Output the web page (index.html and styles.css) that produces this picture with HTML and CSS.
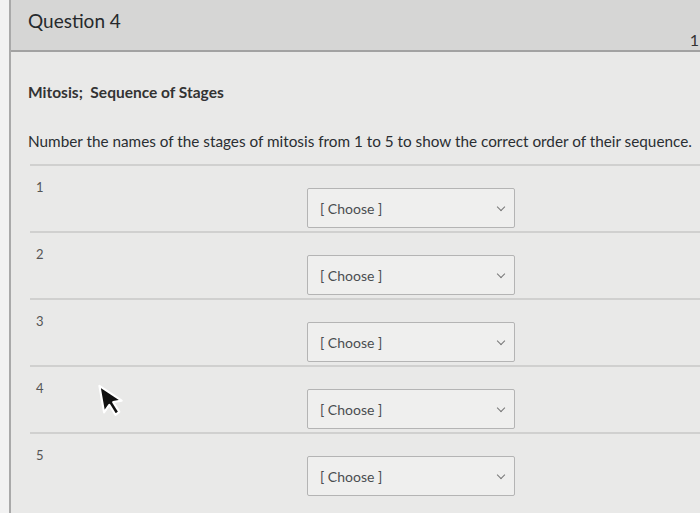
FILE: index.html
```html
<!DOCTYPE html>
<html lang="en">
<head>
  <meta charset="UTF-8" />
  <meta name="viewport" content="width=device-width, initial-scale=1.0"/>
  <title>Question 4</title>
  <link rel="stylesheet" href="styles.css">
</head>
<body>

  <div class="quiz-page">
    <div class="question">
      <div class="question-header">
        <h2>Question 4</h2>
        <span class="points">1</span>
      </div>

      <div class="question-body">
        <p class="title">Mitosis;&nbsp; Sequence of Stages</p>
        <p class="prompt">Number the names of the stages of mitosis from 1 to 5 to show the correct order of their sequence.</p>

        <div class="answers">
          <div class="answer-row">
            <span class="answer-num">1</span>
            <div class="select-box"><span>[ Choose ]</span><span class="chevron"></span></div>
          </div>
          <div class="answer-row">
            <span class="answer-num">2</span>
            <div class="select-box"><span>[ Choose ]</span><span class="chevron"></span></div>
          </div>
          <div class="answer-row">
            <span class="answer-num">3</span>
            <div class="select-box"><span>[ Choose ]</span><span class="chevron"></span></div>
          </div>
          <div class="answer-row">
            <span class="answer-num">4</span>
            <div class="select-box"><span>[ Choose ]</span><span class="chevron"></span></div>
          </div>
          <div class="answer-row">
            <span class="answer-num">5</span>
            <div class="select-box"><span>[ Choose ]</span><span class="chevron"></span></div>
          </div>
        </div>
      </div>
    </div>

    <!-- mouse pointer in the photo -->
    <svg class="pointer" width="28" height="40" viewBox="0 0 26 36">
      <path d="M3 2 L3 27 L9 21 L13 31 L17 29 L13 19 L21 19 Z" fill="#111" stroke="#fff" stroke-width="2" stroke-linejoin="round"/>
    </svg>
  </div>

</body>
</html>
```

FILE: styles.css
```css
* {
  box-sizing: border-box;
}

body {
  margin: 0;
  padding: 0;
  background: #f2f2f2;
  font-family: Lato, 'Open Sans', sans-serif;
  color: #2f3337;
  overflow: hidden;
}

.quiz-page {
  position: relative;
  height: 513px;
  padding-left: 9px;
}

.question {
  height: 100%;
  border-left: 2px solid #a9a9a9;
  background: #e9e9e8;
}

.question-header {
  height: 52px;
  background: #d6d6d5;
  border-bottom: 2px solid #a2a2a2;
  display: flex;
  justify-content: space-between;
  align-items: flex-start;
  padding: 9px 1px 0 17px;
}

.question-header h2 {
  margin: 0;
  font-size: 19px;
  font-weight: 400;
  color: #26292c;
}

.points {
  font-size: 16px;
  margin-top: 21px;
  color: #333;
}

.question-body {
  padding: 0 0 0 17px;
}

.title {
  margin: 31px 0 0;
  font-size: 15.5px;
  font-weight: 700;
  color: #333;
}

.prompt {
  margin: 31px 0 0;
  font-size: 15.3px;
  color: #2a2e32;
  white-space: nowrap;
}

.answers {
  margin-top: 14px;
  margin-left: 2px;
}

.answer-row {
  display: flex;
  align-items: flex-start;
  height: 67px;
  padding-top: 13px;
  border-top: 2px solid #d0d0cf;
}

.answer-num {
  width: 277px;
  padding-left: 6px;
  font-size: 13px;
  color: #555;
}

.select-box {
  width: 208px;
  height: 40px;
  margin-top: 9px;
  display: flex;
  justify-content: space-between;
  align-items: center;
  padding: 0 10px 0 12px;
  background: #efefee;
  border: 1px solid #b4b4b4;
  border-radius: 2px;
  font-size: 14px;
  color: #4a4d50;
}

.chevron {
  width: 6px;
  height: 6px;
  border-right: 1.5px solid #777;
  border-bottom: 1.5px solid #777;
  transform: rotate(45deg);
  margin-top: -3px;
}

.pointer {
  position: absolute;
  left: 99px;
  top: 381px;
  transform: rotate(-10deg);
}
```
